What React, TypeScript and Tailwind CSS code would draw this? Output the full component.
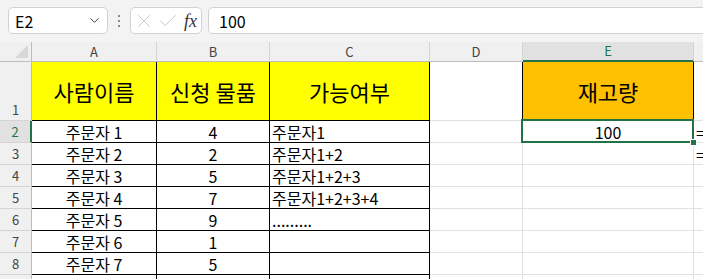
import React from 'react';
import { ChevronDown, X, Check } from 'lucide-react';

const people = [
  { row: 2, name: '주문자 1', qty: '4', note: '주문자1' },
  { row: 3, name: '주문자 2', qty: '2', note: '주문자1+2' },
  { row: 4, name: '주문자 3', qty: '5', note: '주문자1+2+3' },
  { row: 5, name: '주문자 4', qty: '7', note: '주문자1+2+3+4' },
  { row: 6, name: '주문자 5', qty: '9', note: '.........' },
  { row: 7, name: '주문자 6', qty: '1', note: '' },
  { row: 8, name: '주문자 7', qty: '5', note: '' },
];

const font = "font-['Noto_Sans_CJK_KR','Noto_Sans',sans-serif]";

const ColHead = ({ label, active }: { label: string; active?: boolean }) => (
  <div
    className={`flex items-center justify-center text-[13px] border-r border-r-[#d4d4d4] ${
      active
        ? 'bg-[#e1e1e1] text-[#217346] border-b-2 border-b-[#217346]'
        : 'bg-[#f0f0f0] text-[#444] border-b border-b-[#bdbdbd]'
    }`}
  >
    {label}
  </div>
);

const RowHead = ({ n, active, tall }: { n: number; active?: boolean; tall?: boolean }) => (
  <div
    className={`flex justify-center text-[13px] border-b border-b-[#d4d4d4] ${tall ? 'items-end pb-[1px]' : 'items-center'} ${
      active
        ? 'bg-[#e1e1e1] text-[#217346] border-r-2 border-r-[#217346]'
        : 'bg-[#f0f0f0] text-[#444] border-r border-r-[#bdbdbd]'
    }`}
  >
    {n}
  </div>
);

export default function App() {
  return (
    <div className={`w-[703px] h-[279px] overflow-hidden bg-white text-black ${font}`}>
      {/* Formula bar */}
      <div className="h-[42px] bg-[#f3f3f3] flex items-start pt-[7px] pl-[8px]">
        <div className="w-[100px] h-[27px] bg-white border border-[#d1d1d1] rounded-[5px] flex items-center justify-between pl-[6px] pr-[5px] text-[16px]">
          <span>E2</span>
          <ChevronDown className="w-[15px] h-[15px] text-[#444]" strokeWidth={1.6} />
        </div>
        <div className="w-[22px] h-[27px] flex flex-col items-center justify-center gap-[3px]">
          <div className="w-[2px] h-[2px] bg-[#8a8a8a]" />
          <div className="w-[2px] h-[2px] bg-[#8a8a8a]" />
          <div className="w-[2px] h-[2px] bg-[#8a8a8a]" />
        </div>
        <div className="w-[72px] h-[27px] bg-white border border-[#d1d1d1] rounded-[5px] flex items-center pl-[2px] pr-[4px]">
          <X className="w-[22px] h-[22px] text-[#c2c2c2]" strokeWidth={1} />
          <Check className="w-[22px] h-[22px] ml-[2px] text-[#c2c2c2]" strokeWidth={1} />
          <span className="ml-auto font-['Liberation_Serif',serif] italic text-[18px] leading-none text-[#333]">fx</span>
        </div>
        <div className="flex-1 h-[27px] ml-[6px] -mr-[6px] bg-white border border-[#d1d1d1] rounded-[5px] flex items-center pl-[10px] text-[16px]">
          100
        </div>
      </div>

      {/* Sheet */}
      <div className="grid grid-cols-[32px_125px_113px_160px_93px_171px_9px] grid-rows-[20px_59px_22px_22px_22px_22px_22px_22px_22px_4px] h-[237px]">
        {/* header row */}
        <div className="bg-[#f0f0f0] border-r border-r-[#bdbdbd] border-b border-b-[#bdbdbd] flex items-end justify-end p-[3px]">
          <div className="w-0 h-0 border-l-[13px] border-l-transparent border-b-[13px] border-b-[#d8d8d8]" />
        </div>
        <ColHead label="A" />
        <ColHead label="B" />
        <ColHead label="C" />
        <ColHead label="D" />
        <ColHead label="E" active />
        <div className="bg-[#f0f0f0] border-b border-b-[#bdbdbd]" />

        {/* row 1 */}
        <RowHead n={1} tall />
        <div className="bg-[#ffff00] border-r border-b border-black flex items-center justify-center text-[22px]">사람이름</div>
        <div className="bg-[#ffff00] border-r border-b border-black flex items-center justify-center text-[22px]">신청 물품</div>
        <div className="bg-[#ffff00] border-r border-b border-black flex items-center justify-center text-[22px]">가능여부</div>
        <div className="border-r border-r-black border-b border-b-[#e1e1e1]" />
        <div className="bg-[#ffc000] border-r border-b border-black flex items-center justify-center text-[22px]">재고량</div>
        <div className="border-b border-b-[#e1e1e1]" />

        {people.map((p) => (
          <React.Fragment key={p.row}>
            <RowHead n={p.row} active={p.row === 2} />
            <div className="border-r border-b border-black flex items-center justify-center text-[16px] leading-none">{p.name}</div>
            <div className="border-r border-b border-black flex items-center justify-center text-[16px] leading-none">{p.qty}</div>
            <div className="border-r border-b border-black flex items-center pl-[2px] text-[16px] leading-none">{p.note}</div>
            <div className="border-r border-b border-[#e1e1e1]" />
            <div className="relative border-r border-b border-[#e1e1e1] flex items-center justify-center text-[16px] leading-none">
              {p.row === 2 && (
                <>
                  100
                  <div className="absolute z-10 -left-[2px] -top-[2px] -right-[1px] -bottom-[1px] border-2 border-[#217346]" />
                  <div className="absolute z-10 -right-[4px] -bottom-[4px] w-[7px] h-[7px] bg-[#217346] border border-white" />
                </>
              )}
            </div>
            <div className="border-b border-b-[#e1e1e1] overflow-hidden flex items-center pl-[2px] text-[16px] leading-none">
              {p.row <= 3 ? '=' : ''}
            </div>
          </React.Fragment>
        ))}

        {/* row 9 (cut off) */}
        <div className="bg-[#f0f0f0] border-r border-r-[#bdbdbd]" />
        <div className="border-r border-black" />
        <div className="border-r border-black" />
        <div className="border-r border-black" />
        <div className="border-r border-[#e1e1e1]" />
        <div className="border-r border-[#e1e1e1]" />
        <div />
      </div>
    </div>
  );
}
